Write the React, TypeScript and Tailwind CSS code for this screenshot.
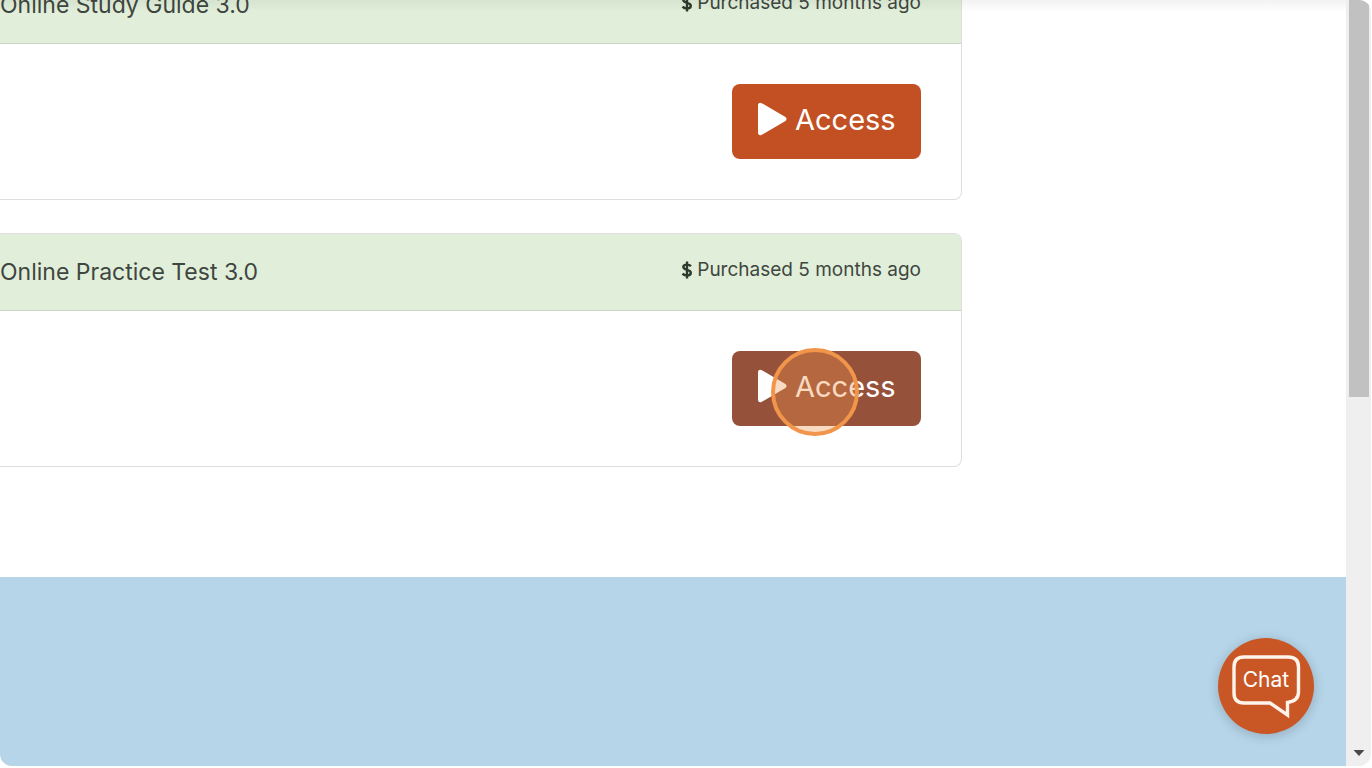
import clsx from "clsx"

type Product = {
    id: string
    title: string
    purchased: string
    pressed: boolean
}

const products: Product[] = [
    {
        id: "study-guide",
        title: "Online Study Guide 3.0",
        purchased: "Purchased 5 months ago",
        pressed: false,
    },
    {
        id: "practice-test",
        title: "Online Practice Test 3.0",
        purchased: "Purchased 5 months ago",
        pressed: true,
    },
]

const PlayIcon = () => (
    <svg viewBox="0 0 30 36" className="w-[30px] h-9" aria-hidden="true">
        <path
            d="M1 3.2C1 1 2.800 0 4.800 1.200L28 14.800c2 1.200 2 3.200 0 4.400L4.800 32.800C2.800 34 1 33 1 30.800Z"
            fill="#fff"
        />
    </svg>
)

const DollarIcon = () => (
    <svg viewBox="0 0 12 18" className="w-3 h-[18px]" aria-hidden="true">
        <path
            d="M6 .5v17M10 5.2C9 4.2 7.700 3.600 6 3.600 3.800 3.600 2.300 4.500 2.300 6.100c0 3.600 7.500 1.900 7.500 5.600 0 1.700-1.600 2.700-3.900 2.700-1.800 0-3.400-.7-4.400-1.800"
            fill="none"
            stroke="#2f3a2f"
            strokeWidth="2.4"
        />
    </svg>
)

const ProductCard = ({ product }: { product: Product }) => (
    <article className="border border-l-0 border-[#dedede] rounded-r-lg overflow-hidden">
        <header className="flex justify-between items-center h-[77px] pr-10 bg-[#e1efda] border-b border-[#cbd8c6] text-[#3f4640]">
            <h2 className="text-[23px] leading-8">{product.title}</h2>
            <p className="flex items-center gap-1 pb-1 text-[19px] leading-6">
                <DollarIcon />
                {product.purchased}
            </p>
        </header>
        <div className="flex justify-end pt-10 pb-10 pr-10">
            <div className="relative">
                <button
                    className={clsx(
                        "flex items-center gap-2 h-[75px] w-[189px] pl-[25px] pb-1 rounded-lg text-white text-[29px]",
                        product.pressed ? "bg-[#96513b]" : "bg-[#c35022]"
                    )}
                >
                    <PlayIcon />
                    Access
                </button>
                {product.pressed && (
                    <span className="absolute left-[39px] -top-[3px] size-[88px] rounded-full border-4 border-[#f0954a] bg-[#f0954a]/35 pointer-events-none" />
                )}
            </div>
        </div>
    </article>
)

const ChatButton = () => (
    <button className="absolute right-8 bottom-8 size-24 rounded-full bg-[#c95726] shadow-[0_2px_12px_rgba(0,0,0,0.2)] text-white">
        <svg
            viewBox="0 0 96 96"
            className="absolute inset-0 size-24"
            aria-hidden="true"
        >
            <path
                d="M26 19H70Q80.500 19 80.500 29V54Q80.500 63 69.500 64.500V77L52 65H26Q16 65 16 55V29Q16 19 26 19Z"
                fill="none"
                stroke="#fff4ea"
                strokeWidth="3.4"
            />
        </svg>
        <span className="relative block pb-3 text-[21px] leading-6">Chat</span>
    </button>
)

const Scrollbar = () => (
    <div className="flex flex-col justify-between w-[25px] pl-[3px] pr-0.5 bg-[#efefef]">
        <div className="h-[397px] bg-[#c1c1c1]" />
        <svg
            viewBox="0 0 12 6"
            className="w-3 h-1.5 mb-2.5 ml-1"
            aria-hidden="true"
        >
            <path d="M0.500 0H11.500L6 6Z" fill="#4a4a4a" />
        </svg>
    </div>
)

const App = () => {
    return (
        <div className="h-screen pb-0.5 pr-px bg-white font-['Inter',sans-serif]">
            <div className="relative flex h-full rounded-b-xl rounded-tr-xl overflow-hidden">
                <main className="relative flex flex-col flex-1 overflow-hidden">
                    <section className="flex flex-col gap-[33px] -mt-[34px] pr-96 pb-[110px]">
                        {products.map((product) => (
                            <ProductCard key={product.id} product={product} />
                        ))}
                    </section>
                    <footer className="flex-1 bg-[#b6d5e9]" />
                    <ChatButton />
                    <div className="absolute top-0 inset-x-0 h-3 bg-linear-to-b from-black/5 to-transparent" />
                </main>
                <Scrollbar />
            </div>
        </div>
    )
}

export default App
